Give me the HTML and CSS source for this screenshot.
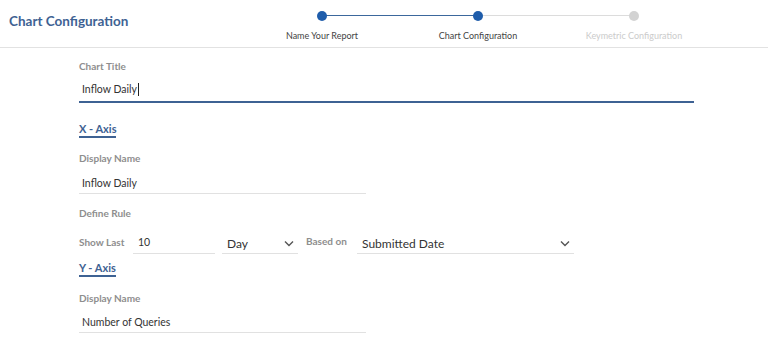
FILE: index.html
```html
<!DOCTYPE html>
<html lang="en">
<head>
    <meta charset="UTF-8">
    <meta name="viewport" content="width=device-width, initial-scale=1.0">
    <title>Chart Configuration</title>
    <link rel="stylesheet" href="styles.css">
</head>
<body>

<div class="header">
    <h1 class="page-title">Chart Configuration</h1>

    <div class="stepper">
        <div class="step done">
            <span class="dot"></span>
            <span class="step-label">Name Your Report</span>
        </div>
        <div class="step current">
            <span class="dot"></span>
            <span class="step-label">Chart Configuration</span>
        </div>
        <div class="step">
            <span class="dot"></span>
            <span class="step-label">Keymetric Configuration</span>
        </div>
    </div>
</div>

<div class="content">
    <div class="label">Chart Title</div>
    <div class="field field-title">Inflow Daily<span class="caret"></span></div>

    <div class="section-title section-x">X - Axis</div>

    <div class="label label-display">Display Name</div>
    <input class="field field-name" type="text" value="Inflow Daily">

    <div class="label label-rule">Define Rule</div>
    <div class="rule-row">
        <span class="inline-label show-last">Show Last</span>
        <input class="field field-count" type="text" value="10">
        <div class="select select-unit">
            <span>Day</span>
            <svg width="10" height="7" viewBox="0 0 10 7"><path d="M1 1.5 L5 5.5 L9 1.5" fill="none" stroke="#555" stroke-width="1.4"/></svg>
        </div>
        <span class="inline-label based-on">Based on</span>
        <div class="select select-date">
            <span>Submitted Date</span>
            <svg width="10" height="7" viewBox="0 0 10 7"><path d="M1 1.5 L5 5.5 L9 1.5" fill="none" stroke="#555" stroke-width="1.4"/></svg>
        </div>
    </div>

    <div class="section-title section-y">Y - Axis</div>

    <div class="label label-display-y">Display Name</div>
    <input class="field field-queries" type="text" value="Number of Queries">
</div>

</body>
</html>
```

FILE: styles.css
```css
body {
    font-family: Lato, "Open Sans", sans-serif;
    background-color: #ffffff;
    color: #333333;
    margin: 0;
}

.header {
    display: flex;
    align-items: flex-start;
    height: 47px;
    border-bottom: 1px solid #e2e2e2;
}

.page-title {
    margin: 13px 0 0 9px;
    font-size: 13.5px;
    line-height: 17px;
    font-weight: 700;
    color: #3e6293;
    width: 235px;
}

.stepper {
    display: flex;
}

.step {
    position: relative;
    width: 156px;
    display: flex;
    flex-direction: column;
    align-items: center;
}

.step.done::after,
.step.current::after {
    content: "";
    position: absolute;
    top: 15px;
    left: 50%;
    width: 100%;
    height: 1px;
    background-color: #dcdcdc;
}

.step.done::after {
    background-color: #3b679c;
}

.dot {
    position: relative;
    z-index: 1;
    width: 10px;
    height: 10px;
    margin-top: 11px;
    border-radius: 50%;
    background-color: #d3d3d3;
}

.step.done .dot,
.step.current .dot {
    background-color: #1f5dab;
}

.step-label {
    margin-top: 9px;
    font-size: 9px;
    line-height: 12px;
    color: #cbcbcb;
}

.step.done .step-label,
.step.current .step-label {
    color: #444444;
}

.content {
    padding: 11px 0 0 79px;
    width: 615px;
}

.label {
    font-size: 10px;
    line-height: 14px;
    font-weight: 700;
    color: #8e8e8e;
}

.field {
    display: block;
    box-sizing: border-box;
    border: none;
    border-bottom: 1px solid #e1e1e1;
    outline: none;
    font-family: inherit;
    font-size: 10.5px;
    line-height: 14px;
    color: #333333;
    background: transparent;
    padding: 0 3px;
}

.field-title {
    width: 615px;
    height: 30px;
    padding-top: 9px;
    padding-bottom: 5px;
    border-bottom: 2px solid #3e6293;
}

.caret {
    display: inline-block;
    width: 1px;
    height: 13px;
    margin-left: 1px;
    vertical-align: -3px;
    background-color: #222222;
}

.section-title {
    display: inline-block;
    font-size: 11px;
    line-height: 12px;
    font-weight: 700;
    color: #3e6293;
    padding-bottom: 1px;
    border-bottom: 2px solid #3e6293;
}

.section-x {
    margin-top: 20px;
}

.label-display {
    margin-top: 13px;
}

.field-name,
.field-queries {
    width: 287px;
    height: 29px;
    padding-top: 11px;
    padding-bottom: 3px;
}

.field-queries {
    height: 28px;
    padding-top: 10px;
}

.label-rule {
    margin-top: 12px;
}

.rule-row {
    display: flex;
    align-items: center;
    height: 24px;
    margin-top: 10px;
}

.inline-label {
    font-size: 10px;
    line-height: 14px;
    font-weight: 700;
    color: #8e8e8e;
}

.show-last {
    width: 54px;
}

.based-on {
    width: 51px;
    margin-top: -2px;
}

.field-count {
    width: 82px;
    height: 24px;
    padding: 5px 5px 4px;
    margin-right: 7px;
}

.select {
    box-sizing: border-box;
    height: 24px;
    display: flex;
    align-items: center;
    justify-content: space-between;
    padding: 3px 4px 0 5px;
    border-bottom: 1px solid #e1e1e1;
    font-size: 12px;
    color: #333333;
}

.select-unit {
    width: 76px;
    margin-right: 8px;
}

.select-date {
    width: 217px;
}

.section-y {
    margin-top: 8px;
}

.label-display-y {
    margin-top: 14px;
}
```
